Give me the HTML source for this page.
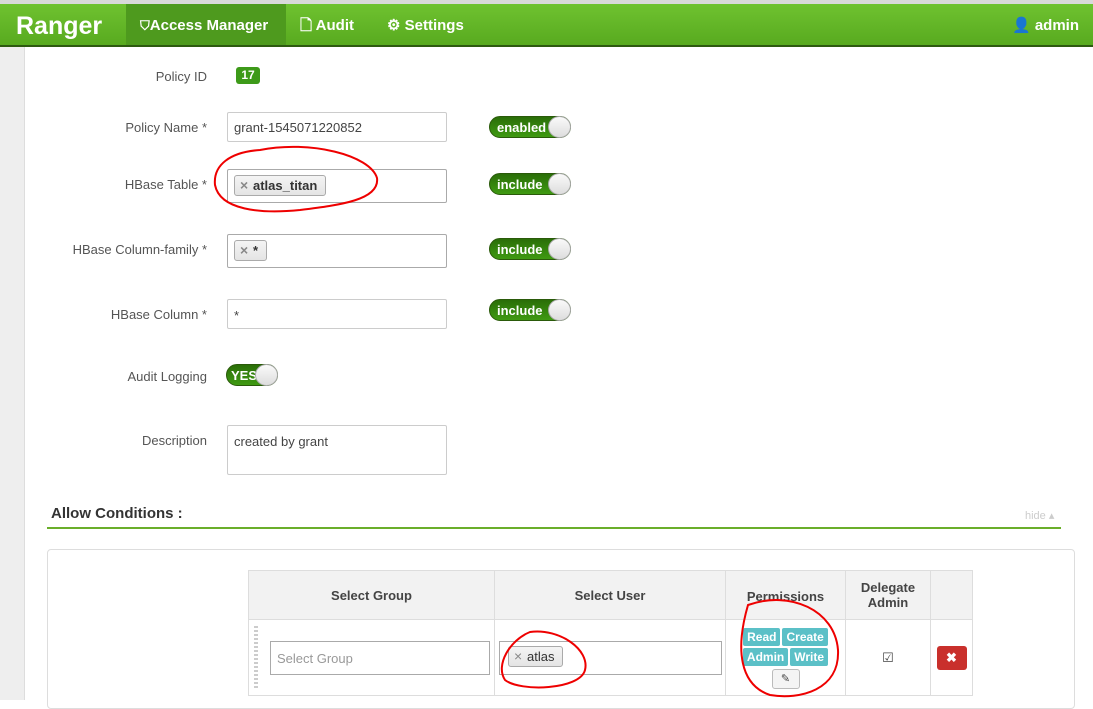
<!DOCTYPE html>
<html><head><meta charset="utf-8"><style>
*{box-sizing:border-box}
body{margin:0;width:1093px;height:700px;overflow:hidden;background:#fff;font-family:"Liberation Sans",sans-serif;font-size:13px;color:#444;position:relative}
.nav{position:absolute;left:0;top:0;width:1093px;height:47px;background:linear-gradient(#6fc230,#58aa1f);border-top:4px solid #d9d9d9;border-bottom:2px solid #2d5a10}
.nav span{position:absolute;color:#fff;font-weight:bold;top:12px;font-size:15px;line-height:20px;height:20px;overflow:visible}
.side{position:absolute;left:0;top:47px;width:25px;height:653px;background:#eee;border-right:1px solid #ddd}
.a{position:absolute}
.lbl{position:absolute;right:886px;font-size:13px;color:#555}
.inp{position:absolute;left:227px;width:220px;border:1px solid #ccc;border-radius:2px;background:#fff}
.tag{position:absolute;left:6px;top:5px;height:21px;border:1px solid #aaa;border-radius:3px;background:linear-gradient(#f4f4f4,#e4e4e4);font-weight:bold;color:#333;padding:2px 8px 0 18px;font-size:13px}
.tag:before{content:"×";position:absolute;left:5px;top:1px;color:#888;font-size:14px}
.tg{position:absolute;left:489px;width:82px;height:22px;border-radius:11px;background:linear-gradient(#2a6e08,#3f9a12);border:1px solid #2a5a0a;color:#fff;font-weight:bold;font-size:13px;padding:3px 0 0 7px}
.tg i{position:absolute;right:-1px;top:-1px;width:23px;height:22px;border-radius:50%;background:linear-gradient(#fafafa,#ddd);border:1px solid #aaa}
th,td{border:1px solid #ddd}
.pb{display:inline-block;background:#5bc0c7;color:#fff;font-weight:bold;font-size:12px;padding:2px 4px;border-radius:2px;margin:1px}
</style></head><body>
<div class="nav">
<span style="left:16px;top:7px;font-size:25px;line-height:30px;height:30px">Ranger</span>
<div class="a" style="left:126px;top:0;width:160px;height:41px;background:#4e9a1e"></div>
<span style="left:140px"><b style="font-family:'DejaVu Sans';font-size:13px">⛉</b>Access Manager</span>
<span style="left:300px">🗋 Audit</span>
<span style="left:387px">⚙ Settings</span>
<span style="left:1012px">👤 admin</span>
</div>
<div class="side"></div>

<div class="lbl" style="top:69px">Policy ID</div>
<div class="a" style="left:236px;top:67px;width:24px;height:17px;background:#3d9a19;color:#fff;font-weight:bold;border-radius:3px;text-align:center;font-size:12px;padding-top:1px">17</div>

<div class="lbl" style="top:120px">Policy Name *</div>
<div class="inp" style="top:112px;height:30px;padding:7px 6px">grant-1545071220852</div>
<div class="tg" style="top:116px">enabled<i></i></div>

<div class="lbl" style="top:177px">HBase Table *</div>
<div class="inp" style="top:169px;height:34px;border-color:#aaa"><div class="tag">atlas_titan</div></div>
<div class="tg" style="top:173px">include<i></i></div>

<div class="lbl" style="top:242px">HBase Column-family *</div>
<div class="inp" style="top:234px;height:34px;border-color:#aaa"><div class="tag">*</div></div>
<div class="tg" style="top:238px">include<i></i></div>

<div class="lbl" style="top:307px">HBase Column *</div>
<div class="inp" style="top:299px;height:30px;padding:8px 6px">*</div>
<div class="tg" style="top:299px">include<i></i></div>

<div class="lbl" style="top:369px">Audit Logging</div>
<div class="tg" style="left:226px;top:364px;width:52px;padding-left:4px">YES<i></i></div>

<div class="lbl" style="top:433px">Description</div>
<div class="inp" style="top:425px;height:50px;padding:8px 6px">created by grant</div>

<div class="a" style="left:51px;top:505px;font-weight:bold;font-size:15px;color:#333">Allow Conditions :</div>
<div class="a" style="left:1025px;top:509px;font-size:11px;color:#ccc">hide ▴</div>
<div class="a" style="left:47px;top:527px;width:1014px;height:2px;background:#6aae2a"></div>
<div class="a" style="left:47px;top:549px;width:1028px;height:160px;border:1px solid #ddd;border-radius:4px"></div>

<table class="a" style="left:248px;top:570px;border-collapse:collapse;font-size:13px">
<tr style="background:#f2f2f2;height:49px;font-weight:bold;color:#444;text-align:center">
<th style="width:246px">Select Group</th><th style="width:231px">Select User</th><th style="width:120px;padding-top:4px">Permissions</th><th style="width:85px">Delegate<br>Admin</th><th style="width:42px"></th></tr>
<tr style="height:76px">
<td style="position:relative"><div class="a" style="left:5px;top:6px;width:4px;height:62px;border-left:2px dotted #ccc;border-right:2px dotted #ccc"></div>
<div style="margin-left:20px;width:220px;height:34px;border:1px solid #aaa;color:#999;padding:9px 6px">Select Group</div></td>
<td><div style="margin-left:3px;width:223px;height:34px;border:1px solid #aaa;position:relative"><div class="tag" style="left:8px;top:4px;font-weight:normal">atlas</div></div></td>
<td style="text-align:center;font-size:0"><span class="pb">Read</span><span class="pb">Create</span><br><span class="pb">Admin</span><span class="pb">Write</span><br><span style="display:inline-block;width:28px;height:20px;border:1px solid #bbb;border-radius:3px;background:#f4f4f4;font-size:11px;margin-top:2px;padding-top:2px">✎</span></td>
<td style="text-align:center">☑</td>
<td style="text-align:center"><span style="display:inline-block;width:30px;height:24px;background:#c9302c;color:#fff;border-radius:3px;font-weight:bold;padding-top:4px">✖</span></td>
</tr></table>

<svg class="a" style="left:0;top:0" width="1093" height="700" fill="none" stroke="#e00" stroke-width="2">
<path d="M260 150 C310 140,370 155,377 178 C380 200,340 205,300 210 C260 214,220 210,215 185 C213 165,230 152,260 150Z"/>
<path d="M530 632 C560 628,590 650,585 670 C580 690,520 692,505 680 C495 665,510 640,530 632Z"/>
<path d="M748 605 C790 590,835 610,838 650 C840 690,800 700,770 695 C740 685,735 650,748 605Z"/>
</svg>
</body></html>
